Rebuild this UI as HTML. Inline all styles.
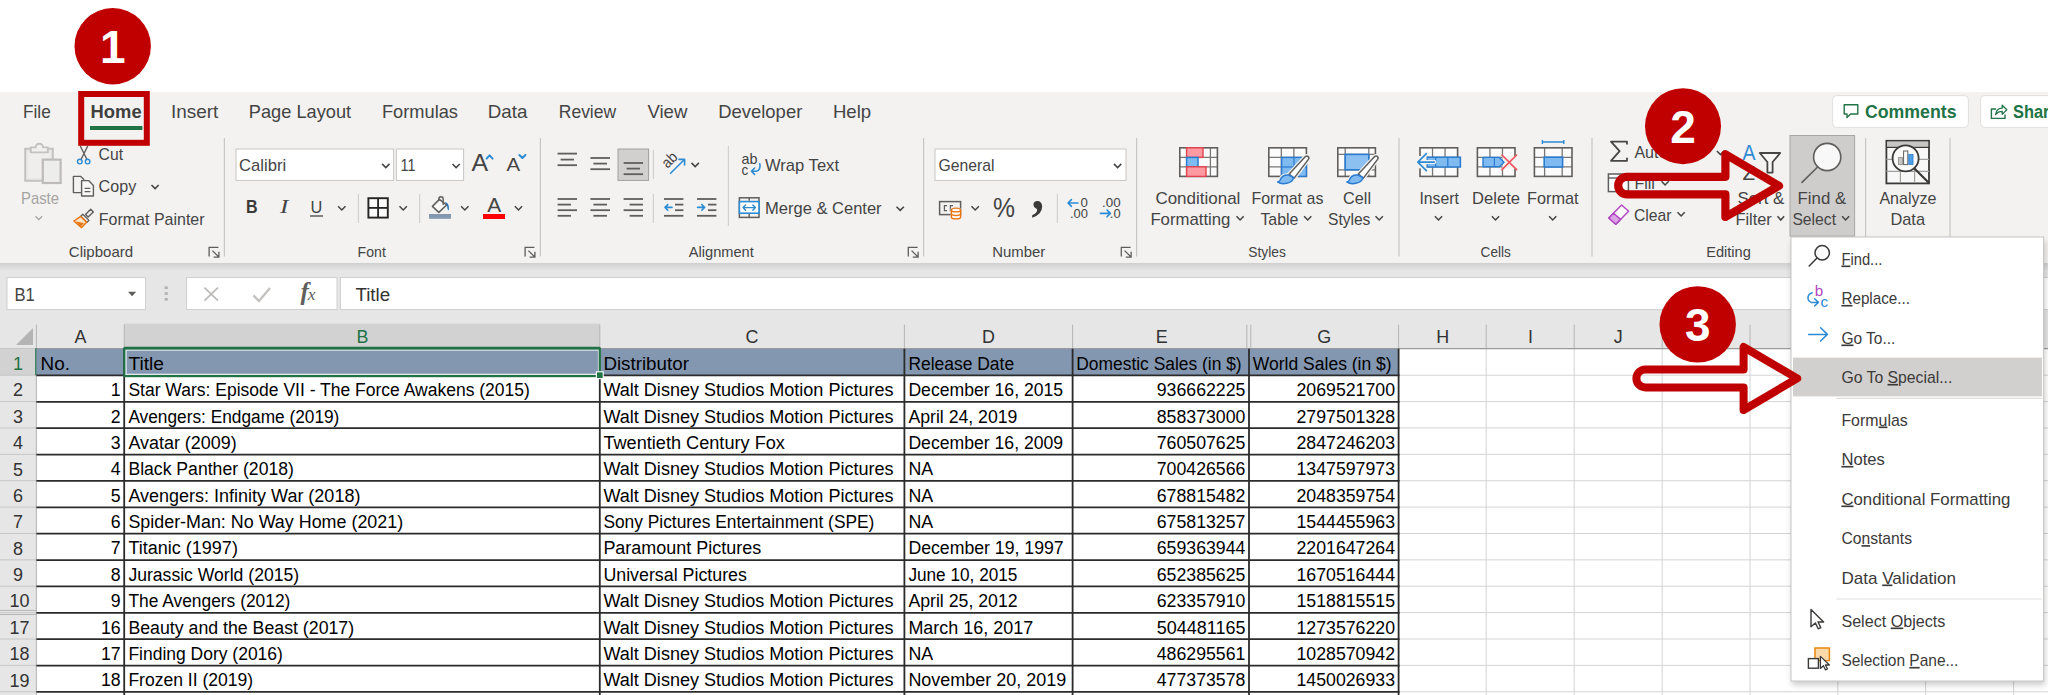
<!DOCTYPE html>
<html lang="en"><head><meta charset="utf-8"><title>Excel - Find &amp; Select - Go To Special</title>
<style>
html,body{margin:0;padding:0;background:#fff;}
body{width:2048px;height:695px;overflow:hidden;font-family:'Liberation Sans', sans-serif;}
svg{display:block;font-family:'Liberation Sans', sans-serif;}
text{white-space:pre;}
</style></head><body>
<svg width="2048" height="695" viewBox="0 0 2048 695">
<defs>
<linearGradient id="shd" x1="0" y1="0" x2="0" y2="1"><stop offset="0" stop-color="#cfcfcf"/><stop offset="1" stop-color="#e6e6e6"/></linearGradient>
<filter id="mshadow" x="-5%" y="-5%" width="110%" height="110%"><feGaussianBlur stdDeviation="3"/></filter>
</defs>
<rect x="0.00" y="0.00" width="2048.00" height="695.00" fill="#ffffff"/>
<rect x="0.00" y="92.00" width="2048.00" height="171.00" fill="#f3f2f1"/>
<rect x="0.00" y="263.00" width="2048.00" height="432.00" fill="#e6e6e6"/>
<rect x="0.00" y="263.00" width="2048.00" height="8.00" fill="url(#shd)"/>
<text x="23.00" y="118.20" font-size="18.2" fill="#444444" textLength="27.70" lengthAdjust="spacingAndGlyphs">File</text>
<text x="171.00" y="118.20" font-size="18.2" fill="#444444" textLength="47.40" lengthAdjust="spacingAndGlyphs">Insert</text>
<text x="248.80" y="118.20" font-size="18.2" fill="#444444" textLength="102.30" lengthAdjust="spacingAndGlyphs">Page Layout</text>
<text x="381.90" y="118.20" font-size="18.2" fill="#444444" textLength="76.10" lengthAdjust="spacingAndGlyphs">Formulas</text>
<text x="487.80" y="118.20" font-size="18.2" fill="#444444" textLength="39.60" lengthAdjust="spacingAndGlyphs">Data</text>
<text x="558.80" y="118.20" font-size="18.2" fill="#444444" textLength="57.30" lengthAdjust="spacingAndGlyphs">Review</text>
<text x="647.40" y="118.20" font-size="18.2" fill="#444444" textLength="40.00" lengthAdjust="spacingAndGlyphs">View</text>
<text x="718.20" y="118.20" font-size="18.2" fill="#444444" textLength="84.10" lengthAdjust="spacingAndGlyphs">Developer</text>
<text x="832.90" y="118.20" font-size="18.2" fill="#444444" textLength="38.20" lengthAdjust="spacingAndGlyphs">Help</text>
<text x="90.60" y="118.20" font-size="18.2" fill="#3f3f3f" textLength="51.00" lengthAdjust="spacingAndGlyphs" font-weight="bold">Home</text>
<rect x="90.00" y="126.00" width="52.40" height="4.00" fill="#217346"/>
<rect x="1832.60" y="95.60" width="135.80" height="31.80" fill="#ffffff" stroke="#e1dfdd" stroke-width="1" rx="4"/>
<rect x="1980.60" y="95.60" width="90.00" height="31.80" fill="#ffffff" stroke="#e1dfdd" stroke-width="1" rx="4"/>
<path d="M1844.2,104.8 h13.6 v9.2 h-7.2 l-3.6,3.4 v-3.4 h-2.8 z" fill="none" stroke="#217346" stroke-width="1.4" stroke-linejoin="round"/>
<text x="1865.00" y="118.00" font-size="17.6" fill="#217346" textLength="91.50" lengthAdjust="spacingAndGlyphs" font-weight="bold">Comments</text>
<path d="M1996,109 h-4.6 v9.4 h13.6 v-4" fill="none" stroke="#217346" stroke-width="1.4" stroke-linejoin="round"/>
<path d="M1995.6,114.6 c0.6,-4.4 3,-6.4 6.6,-6.4 v-3 l4.6,4.6 l-4.6,4.6 v-3 c-2.8,0 -4.8,0.8 -6.6,3.2 z" fill="none" stroke="#217346" stroke-width="1.3" stroke-linejoin="round"/>
<text x="2013.00" y="118.00" font-size="17.6" fill="#217346" textLength="45.50" lengthAdjust="spacingAndGlyphs" font-weight="bold">Share</text>
<line x1="224.40" y1="138.00" x2="224.40" y2="256.60" stroke="#c8c6c4" stroke-width="1.2" />
<line x1="540.40" y1="138.00" x2="540.40" y2="256.60" stroke="#c8c6c4" stroke-width="1.2" />
<line x1="923.60" y1="138.00" x2="923.60" y2="256.60" stroke="#c8c6c4" stroke-width="1.2" />
<line x1="1136.60" y1="138.00" x2="1136.60" y2="256.60" stroke="#c8c6c4" stroke-width="1.2" />
<line x1="1399.00" y1="138.00" x2="1399.00" y2="256.60" stroke="#c8c6c4" stroke-width="1.2" />
<line x1="1592.00" y1="138.00" x2="1592.00" y2="256.60" stroke="#c8c6c4" stroke-width="1.2" />
<line x1="1865.60" y1="138.00" x2="1865.60" y2="256.60" stroke="#c8c6c4" stroke-width="1.2" />
<line x1="1950.00" y1="138.00" x2="1950.00" y2="256.60" stroke="#c8c6c4" stroke-width="1.2" />
<line x1="358.40" y1="194.00" x2="358.40" y2="223.00" stroke="#d2d0ce" stroke-width="1.2" />
<line x1="419.60" y1="194.00" x2="419.60" y2="223.00" stroke="#d2d0ce" stroke-width="1.2" />
<line x1="653.40" y1="150.00" x2="653.40" y2="179.00" stroke="#d2d0ce" stroke-width="1.2" />
<line x1="653.40" y1="194.00" x2="653.40" y2="223.00" stroke="#d2d0ce" stroke-width="1.2" />
<line x1="728.40" y1="146.00" x2="728.40" y2="226.00" stroke="#d2d0ce" stroke-width="1.2" />
<line x1="1057.40" y1="194.00" x2="1057.40" y2="223.00" stroke="#d2d0ce" stroke-width="1.2" />
<text x="68.80" y="257.40" font-size="14.6" fill="#444444" textLength="64.40" lengthAdjust="spacingAndGlyphs">Clipboard</text>
<text x="357.60" y="257.40" font-size="14.6" fill="#444444" textLength="28.20" lengthAdjust="spacingAndGlyphs">Font</text>
<text x="688.80" y="257.40" font-size="14.6" fill="#444444" textLength="65.00" lengthAdjust="spacingAndGlyphs">Alignment</text>
<text x="992.20" y="257.40" font-size="14.6" fill="#444444" textLength="53.00" lengthAdjust="spacingAndGlyphs">Number</text>
<text x="1248.20" y="257.40" font-size="14.6" fill="#444444" textLength="37.60" lengthAdjust="spacingAndGlyphs">Styles</text>
<text x="1480.60" y="257.40" font-size="14.6" fill="#444444" textLength="30.20" lengthAdjust="spacingAndGlyphs">Cells</text>
<text x="1706.20" y="257.40" font-size="14.6" fill="#444444" textLength="44.60" lengthAdjust="spacingAndGlyphs">Editing</text>
<path d="M218.40,247.30 H209.10 V256.60" fill="none" stroke="#605e5c" stroke-width="1.3"/>
<path d="M212.40,250.60 L218.70,256.90 M218.90,251.80 V257.10 H213.60" fill="none" stroke="#605e5c" stroke-width="1.3"/>
<path d="M534.40,247.30 H525.10 V256.60" fill="none" stroke="#605e5c" stroke-width="1.3"/>
<path d="M528.40,250.60 L534.70,256.90 M534.90,251.80 V257.10 H529.60" fill="none" stroke="#605e5c" stroke-width="1.3"/>
<path d="M917.60,247.30 H908.30 V256.60" fill="none" stroke="#605e5c" stroke-width="1.3"/>
<path d="M911.60,250.60 L917.90,256.90 M918.10,251.80 V257.10 H912.80" fill="none" stroke="#605e5c" stroke-width="1.3"/>
<path d="M1130.60,247.30 H1121.30 V256.60" fill="none" stroke="#605e5c" stroke-width="1.3"/>
<path d="M1124.60,250.60 L1130.90,256.90 M1131.10,251.80 V257.10 H1125.80" fill="none" stroke="#605e5c" stroke-width="1.3"/>
<rect x="25.20" y="148.80" width="27.60" height="32.00" fill="#e9e8e7" stroke="#c4c2c0" stroke-width="2"/>
<rect x="28.00" y="152.40" width="22.00" height="25.60" fill="#efeeed"/>
<path d="M30.8,152.4 v-5 h4.8 a3.7,3.7 0 0 1 7.4,0 h4.8 v5 z" fill="#f1f0ef" stroke="#c4c2c0" stroke-width="1.9"/>
<rect x="42.80" y="159.60" width="17.80" height="23.40" fill="#ededec" stroke="#bdbbb9" stroke-width="2.2"/>
<text x="21.00" y="203.60" font-size="16.4" fill="#a6a4a2" textLength="38.00" lengthAdjust="spacingAndGlyphs">Paste</text>
<path d="M35.50,216.30 l3.30,3.30 l3.30,-3.30" fill="none" stroke="#a6a4a2" stroke-width="1.3" stroke-linejoin="miter"/>
<path d="M80.5,146.5 L87,159.5 M87.5,146.5 L81,159.5" fill="none" stroke="#605e5c" stroke-width="1.4" stroke-linecap="round"/>
<circle cx="79.8" cy="161.6" r="2.3" fill="none" stroke="#2b8bd4" stroke-width="1.4"/>
<circle cx="87.6" cy="161.6" r="2.3" fill="none" stroke="#2b8bd4" stroke-width="1.4"/>
<text x="98.60" y="160.00" font-size="16.4" fill="#444444" textLength="24.40" lengthAdjust="spacingAndGlyphs">Cut</text>
<path d="M81,192.6 h-7.6 v-16.2 h7.4 l3.4,3.4" fill="none" stroke="#605e5c" stroke-width="1.4" stroke-linejoin="round"/>
<path d="M81.6,180.6 h7 l4.8,4.8 v10.6 h-11.8 z" fill="#f8f8f8" stroke="#605e5c" stroke-width="1.4" stroke-linejoin="round"/>
<path d="M84.6,188.4 h5.8 M84.6,191.6 h5.8" fill="none" stroke="#605e5c" stroke-width="1.2"/>
<text x="98.60" y="192.40" font-size="16.4" fill="#444444" textLength="37.60" lengthAdjust="spacingAndGlyphs">Copy</text>
<path d="M151.50,184.90 l3.60,3.70 l3.60,-3.70" fill="none" stroke="#444444" stroke-width="1.5" stroke-linejoin="miter"/>
<path d="M85.5,214.5 l5.2,-5.2 l2.6,2.6 l-5.2,5.2 z" fill="none" stroke="#605e5c" stroke-width="1.4" stroke-linejoin="round"/>
<path d="M82.8,214.2 l6.2,6.2 l-2,2 l-6.2,-6.2 z" fill="#f3f2f1" stroke="#605e5c" stroke-width="1.3" stroke-linejoin="round"/>
<path d="M80.8,216.4 l5.8,5.8 l-5,5.4 l-7.8,-6.6 z" fill="#fde3c8" stroke="#e8740c" stroke-width="1.4" stroke-linejoin="round"/>
<path d="M75.6,221.6 l5.4,4.6 l3,-3.2 z" fill="#e8740c"/>
<text x="98.80" y="225.00" font-size="16.4" fill="#444444" textLength="105.80" lengthAdjust="spacingAndGlyphs">Format Painter</text>
<rect x="236.00" y="149.00" width="157.60" height="31.40" fill="#ffffff" stroke="#c8c6c4" stroke-width="1"/>
<text x="239.00" y="170.60" font-size="16.4" fill="#444444" textLength="47.20" lengthAdjust="spacingAndGlyphs">Calibri</text>
<path d="M382.10,163.90 l3.70,3.70 l3.70,-3.70" fill="none" stroke="#444444" stroke-width="1.5" stroke-linejoin="miter"/>
<rect x="396.40" y="149.00" width="67.20" height="31.40" fill="#ffffff" stroke="#c8c6c4" stroke-width="1"/>
<text x="400.60" y="170.60" font-size="16.4" fill="#444444" textLength="15.00" lengthAdjust="spacingAndGlyphs">11</text>
<path d="M452.50,163.90 l3.60,3.70 l3.60,-3.70" fill="none" stroke="#444444" stroke-width="1.5" stroke-linejoin="miter"/>
<text x="471.40" y="170.60" font-size="24" fill="#444444" textLength="16.60" lengthAdjust="spacingAndGlyphs">A</text>
<path d="M486.6,158.6 l3,-3.2 l3,3.2" fill="none" stroke="#2b8bd4" stroke-width="2" stroke-linecap="round" stroke-linejoin="round"/>
<text x="506.60" y="170.60" font-size="18" fill="#444444" textLength="13.60" lengthAdjust="spacingAndGlyphs">A</text>
<path d="M519.4,155 l3,3 l3,-3" fill="none" stroke="#2b8bd4" stroke-width="2" stroke-linecap="round" stroke-linejoin="round"/>
<text x="246.00" y="213.20" font-size="18.4" fill="#3b3a39" textLength="11.60" lengthAdjust="spacingAndGlyphs" font-weight="bold">B</text>
<text x="280.00" y="213.40" font-size="19.4" fill="#444444" textLength="8.40" lengthAdjust="spacingAndGlyphs" font-family="'Liberation Serif', serif" font-style="italic">I</text>
<text x="310.60" y="213.00" font-size="16.8" fill="#444444" textLength="11.80" lengthAdjust="spacingAndGlyphs">U</text>
<line x1="310.00" y1="216.00" x2="323.00" y2="216.00" stroke="#444444" stroke-width="1.3" />
<path d="M338.10,206.30 l3.70,3.70 l3.70,-3.70" fill="none" stroke="#444444" stroke-width="1.5" stroke-linejoin="miter"/>
<rect x="368.40" y="198.20" width="19.40" height="19.40" fill="#fafafa" stroke="#252423" stroke-width="1.9"/>
<line x1="378.10" y1="198.00" x2="378.10" y2="217.60" stroke="#252423" stroke-width="1.8" />
<line x1="368.00" y1="207.90" x2="388.00" y2="207.90" stroke="#252423" stroke-width="1.8" />
<path d="M399.50,206.30 l3.70,3.70 l3.70,-3.70" fill="none" stroke="#444444" stroke-width="1.5" stroke-linejoin="miter"/>
<path d="M432.4,206.4 l7,-7 l7.2,5.6 l-7.8,7.4 z" fill="#f8f8f8" stroke="#605e5c" stroke-width="1.5" stroke-linejoin="round"/>
<path d="M438.8,200.6 v-1.6 a2.2,2.3 0 0 1 4.4,0 v5.6" fill="none" stroke="#605e5c" stroke-width="1.4" stroke-linecap="round"/>
<path d="M444.8,202 c3.6,0.8 4.6,3.8 4,8.6 c-1.7,-0.7 -1.5,-3.4 -1.7,-5 z" fill="#1e6fb8"/>
<rect x="429.00" y="214.00" width="22.00" height="4.80" fill="#8497b0"/>
<path d="M461.10,206.30 l3.70,3.70 l3.70,-3.70" fill="none" stroke="#444444" stroke-width="1.5" stroke-linejoin="miter"/>
<text x="487.20" y="212.00" font-size="20.8" fill="#444444" textLength="14.00" lengthAdjust="spacingAndGlyphs">A</text>
<rect x="483.00" y="214.00" width="22.00" height="5.00" fill="#ff0000"/>
<path d="M514.90,206.30 l3.60,3.70 l3.60,-3.70" fill="none" stroke="#444444" stroke-width="1.5" stroke-linejoin="miter"/>
<line x1="557.60" y1="153.60" x2="577.00" y2="153.60" stroke="#605e5c" stroke-width="1.8" />
<line x1="560.60" y1="159.60" x2="574.00" y2="159.60" stroke="#605e5c" stroke-width="1.8" />
<line x1="557.60" y1="165.20" x2="577.00" y2="165.20" stroke="#605e5c" stroke-width="1.8" />
<line x1="590.40" y1="158.00" x2="610.00" y2="158.00" stroke="#605e5c" stroke-width="1.8" />
<line x1="593.40" y1="163.60" x2="607.00" y2="163.60" stroke="#605e5c" stroke-width="1.8" />
<line x1="590.40" y1="169.20" x2="610.00" y2="169.20" stroke="#605e5c" stroke-width="1.8" />
<rect x="618.00" y="149.00" width="30.60" height="31.40" fill="#d2d0ce" stroke="#a19f9d" stroke-width="1"/>
<line x1="623.60" y1="163.00" x2="643.00" y2="163.00" stroke="#605e5c" stroke-width="1.8" />
<line x1="626.60" y1="168.60" x2="640.00" y2="168.60" stroke="#605e5c" stroke-width="1.8" />
<line x1="623.60" y1="174.20" x2="643.00" y2="174.20" stroke="#605e5c" stroke-width="1.8" />
<line x1="557.60" y1="199.00" x2="577.00" y2="199.00" stroke="#605e5c" stroke-width="1.8" />
<line x1="557.60" y1="204.60" x2="571.00" y2="204.60" stroke="#605e5c" stroke-width="1.8" />
<line x1="557.60" y1="210.20" x2="577.00" y2="210.20" stroke="#605e5c" stroke-width="1.8" />
<line x1="557.60" y1="215.80" x2="571.00" y2="215.80" stroke="#605e5c" stroke-width="1.8" />
<line x1="590.40" y1="199.00" x2="610.00" y2="199.00" stroke="#605e5c" stroke-width="1.8" />
<line x1="593.40" y1="204.60" x2="607.00" y2="204.60" stroke="#605e5c" stroke-width="1.8" />
<line x1="590.40" y1="210.20" x2="610.00" y2="210.20" stroke="#605e5c" stroke-width="1.8" />
<line x1="593.40" y1="215.80" x2="607.00" y2="215.80" stroke="#605e5c" stroke-width="1.8" />
<line x1="623.60" y1="199.00" x2="643.00" y2="199.00" stroke="#605e5c" stroke-width="1.8" />
<line x1="629.60" y1="204.60" x2="643.00" y2="204.60" stroke="#605e5c" stroke-width="1.8" />
<line x1="623.60" y1="210.20" x2="643.00" y2="210.20" stroke="#605e5c" stroke-width="1.8" />
<line x1="629.60" y1="215.80" x2="643.00" y2="215.80" stroke="#605e5c" stroke-width="1.8" />
<text x="0" y="0" font-size="15.2" fill="#444444" transform="translate(667.4,169) rotate(-45)" textLength="15.6" lengthAdjust="spacingAndGlyphs">ab</text>
<path d="M670.6,173.2 L684.2,159.8 M679,159.4 h5.6 v5.6" fill="none" stroke="#2b8bd4" stroke-width="1.6" stroke-linecap="round" stroke-linejoin="round"/>
<path d="M691.50,162.90 l3.70,3.70 l3.70,-3.70" fill="none" stroke="#444444" stroke-width="1.5" stroke-linejoin="miter"/>
<line x1="664.00" y1="199.00" x2="683.40" y2="199.00" stroke="#605e5c" stroke-width="1.8" />
<line x1="664.00" y1="215.80" x2="683.40" y2="215.80" stroke="#605e5c" stroke-width="1.8" />
<line x1="675.00" y1="204.60" x2="683.40" y2="204.60" stroke="#605e5c" stroke-width="1.8" />
<line x1="675.00" y1="210.20" x2="683.40" y2="210.20" stroke="#605e5c" stroke-width="1.8" />
<path d="M672,207.4 h-7 M667.8,204.6 l-2.8,2.8 l2.8,2.8" fill="none" stroke="#2b8bd4" stroke-width="1.6" stroke-linecap="round" stroke-linejoin="round"/>
<line x1="697.00" y1="199.00" x2="716.40" y2="199.00" stroke="#605e5c" stroke-width="1.8" />
<line x1="697.00" y1="215.80" x2="716.40" y2="215.80" stroke="#605e5c" stroke-width="1.8" />
<line x1="708.00" y1="204.60" x2="716.40" y2="204.60" stroke="#605e5c" stroke-width="1.8" />
<line x1="708.00" y1="210.20" x2="716.40" y2="210.20" stroke="#605e5c" stroke-width="1.8" />
<path d="M697.6,207.4 h7 M701.8,204.6 l2.8,2.8 l-2.8,2.8" fill="none" stroke="#2b8bd4" stroke-width="1.6" stroke-linecap="round" stroke-linejoin="round"/>
<text x="741.40" y="164.00" font-size="14.6" fill="#444444" textLength="16.00" lengthAdjust="spacingAndGlyphs">ab</text>
<text x="741.60" y="174.80" font-size="14.6" fill="#444444" textLength="6.80" lengthAdjust="spacingAndGlyphs">c</text>
<path d="M759.8,163.8 c1.2,3.8 -0.8,7.2 -3.8,7.4 h-4.4 M754.6,168 l-3.2,3.2 l3.2,3.2" fill="none" stroke="#2b8bd4" stroke-width="1.6" stroke-linecap="round" stroke-linejoin="round"/>
<text x="765.00" y="170.60" font-size="16.4" fill="#444444" textLength="74.00" lengthAdjust="spacingAndGlyphs">Wrap Text</text>
<rect x="739.40" y="197.80" width="19.60" height="19.60" fill="none" stroke="#605e5c" stroke-width="1.5"/>
<rect x="739.40" y="201.60" width="19.60" height="11.60" fill="#ffffff" stroke="#2b8bd4" stroke-width="1.6"/>
<line x1="749.20" y1="198.00" x2="749.20" y2="200.80" stroke="#605e5c" stroke-width="1.4" />
<line x1="749.20" y1="214.00" x2="749.20" y2="217.40" stroke="#605e5c" stroke-width="1.4" />
<path d="M743,207.6 h12.4 M745.6,205 l-2.6,2.6 l2.6,2.6 M752.8,205 l2.6,2.6 l-2.6,2.6" fill="none" stroke="#2b8bd4" stroke-width="1.4" stroke-linecap="round" stroke-linejoin="round"/>
<text x="765.00" y="214.00" font-size="16.4" fill="#444444" textLength="116.60" lengthAdjust="spacingAndGlyphs">Merge &amp; Center</text>
<path d="M896.50,206.70 l3.70,3.70 l3.70,-3.70" fill="none" stroke="#444444" stroke-width="1.5" stroke-linejoin="miter"/>
<rect x="935.00" y="149.00" width="191.00" height="31.40" fill="#ffffff" stroke="#c8c6c4" stroke-width="1"/>
<text x="938.40" y="170.60" font-size="16.4" fill="#444444" textLength="56.00" lengthAdjust="spacingAndGlyphs">General</text>
<path d="M1113.90,163.90 l3.70,3.70 l3.70,-3.70" fill="none" stroke="#444444" stroke-width="1.5" stroke-linejoin="miter"/>
<rect x="939.60" y="201.60" width="21.00" height="13.00" fill="none" stroke="#605e5c" stroke-width="1.5"/>
<path d="M947,205.6 h-2.6 v5 h2.6 M953,205.6 h-2.6 v5 h2.6" fill="none" stroke="#605e5c" stroke-width="1.2"/>
<rect x="950.60" y="208.60" width="10.80" height="10.60" fill="#f3f2f1"/>
<path d="M951.4,210 v7 a4.6,1.9 0 0 0 9.2,0 v-7" fill="#fff" stroke="#e8740c" stroke-width="1.4"/>
<ellipse cx="956" cy="210" rx="4.6" ry="1.9" fill="#fff" stroke="#e8740c" stroke-width="1.4"/>
<path d="M951.4,213.6 a4.6,1.9 0 0 0 9.2,0" fill="none" stroke="#e8740c" stroke-width="1.3"/>
<path d="M971.50,206.30 l3.70,3.70 l3.70,-3.70" fill="none" stroke="#444444" stroke-width="1.5" stroke-linejoin="miter"/>
<text x="993.00" y="217.40" font-size="27" fill="#444444" textLength="22.00" lengthAdjust="spacingAndGlyphs">%</text>
<text x="1031.40" y="208.60" font-size="54" fill="#3b3a39" textLength="12.60" lengthAdjust="spacingAndGlyphs" font-weight="bold" font-family="'Liberation Serif', serif">,</text>
<path d="M1068,203 h10 M1071.4,199.6 l-3.4,3.4 l3.4,3.4" fill="none" stroke="#2b8bd4" stroke-width="1.6" stroke-linecap="round" stroke-linejoin="round"/>
<text x="1080.60" y="206.60" font-size="12.4" fill="#444444" textLength="7.40" lengthAdjust="spacingAndGlyphs">0</text>
<text x="1070.00" y="218.00" font-size="12.4" fill="#444444" textLength="18.00" lengthAdjust="spacingAndGlyphs">.00</text>
<text x="1102.00" y="206.60" font-size="12.4" fill="#444444" textLength="18.60" lengthAdjust="spacingAndGlyphs">.00</text>
<path d="M1100.4,213.4 h10 M1107,210 l3.4,3.4 l-3.4,3.4" fill="none" stroke="#2b8bd4" stroke-width="1.6" stroke-linecap="round" stroke-linejoin="round"/>
<text x="1109.80" y="218.00" font-size="12.4" fill="#444444" textLength="10.80" lengthAdjust="spacingAndGlyphs">.0</text>
<rect x="1179.80" y="147.80" width="37.60" height="28.60" fill="#fbfbfb"/>
<line x1="1186.60" y1="147.80" x2="1186.60" y2="176.40" stroke="#797775" stroke-width="1.3" />
<line x1="1210.40" y1="147.80" x2="1210.40" y2="176.40" stroke="#797775" stroke-width="1.3" />
<line x1="1179.80" y1="157.33" x2="1217.40" y2="157.33" stroke="#797775" stroke-width="1.3" />
<line x1="1179.80" y1="166.87" x2="1217.40" y2="166.87" stroke="#797775" stroke-width="1.3" />
<rect x="1179.80" y="147.80" width="37.60" height="28.60" fill="none" stroke="#605e5c" stroke-width="1.6"/>
<rect x="1186.60" y="147.80" width="16.40" height="9.60" fill="#ff9aa2" stroke="#e0434d" stroke-width="1.4"/>
<rect x="1186.60" y="157.40" width="11.40" height="9.40" fill="#7fbaf0" stroke="#2b7cd0" stroke-width="1.5"/>
<rect x="1186.60" y="166.80" width="19.40" height="9.60" fill="#ff9aa2" stroke="#e0434d" stroke-width="1.4"/>
<text x="1155.40" y="203.60" font-size="16.4" fill="#444444" textLength="85.00" lengthAdjust="spacingAndGlyphs">Conditional</text>
<text x="1150.40" y="225.00" font-size="16.4" fill="#444444" textLength="80.00" lengthAdjust="spacingAndGlyphs">Formatting</text>
<path d="M1236.50,216.30 l3.60,3.70 l3.60,-3.70" fill="none" stroke="#444444" stroke-width="1.5" stroke-linejoin="miter"/>
<rect x="1268.80" y="147.80" width="37.60" height="28.60" fill="#fbfbfb"/>
<line x1="1281.33" y1="147.80" x2="1281.33" y2="176.40" stroke="#797775" stroke-width="1.3" />
<line x1="1293.87" y1="147.80" x2="1293.87" y2="176.40" stroke="#797775" stroke-width="1.3" />
<line x1="1268.80" y1="157.33" x2="1306.40" y2="157.33" stroke="#797775" stroke-width="1.3" />
<line x1="1268.80" y1="166.87" x2="1306.40" y2="166.87" stroke="#797775" stroke-width="1.3" />
<rect x="1268.80" y="147.80" width="37.60" height="28.60" fill="none" stroke="#605e5c" stroke-width="1.6"/>
<rect x="1281.60" y="157.40" width="24.80" height="19.00" fill="#7fbaf0" stroke="#2b7cd0" stroke-width="1.4"/>
<line x1="1294.00" y1="157.40" x2="1294.00" y2="176.40" stroke="#2b7cd0" stroke-width="1.2" />
<line x1="1281.60" y1="167.00" x2="1306.40" y2="167.00" stroke="#2b7cd0" stroke-width="1.2" />
<path d="M1289.1999999999998,174.0 L1305.1999999999998,156.8 c2.4,-2 4.8,0.6 3,2.8 L1294.0,178.4 z" fill="#f3f2f1" stroke="#f3f2f1" stroke-width="4" stroke-linejoin="round"/>
<path d="M1288.8,175.0 c-6,-0.6 -8,3 -8.6,5 c-0.4,1.2 -1.4,1.7 -2.6,1.9 c4,3 15,2.2 16,-4.4 z" fill="#f3f2f1" stroke="#f3f2f1" stroke-width="3.4" stroke-linejoin="round"/>
<path d="M1289.1999999999998,174.0 L1305.1999999999998,156.8 c2.4,-2 4.8,0.6 3,2.8 L1294.0,178.4 z" fill="#ffffff" stroke="#605e5c" stroke-width="1.5" stroke-linejoin="round"/>
<path d="M1288.8,175.0 c-6,-0.6 -8,3 -8.6,5 c-0.4,1.2 -1.4,1.7 -2.6,1.9 c4,3 15,2.2 16,-4.4 z" fill="#7fbaf0" stroke="#2b7cd0" stroke-width="1.5" stroke-linejoin="round"/>
<text x="1251.40" y="203.60" font-size="16.4" fill="#444444" textLength="72.00" lengthAdjust="spacingAndGlyphs">Format as</text>
<text x="1260.40" y="225.00" font-size="16.4" fill="#444444" textLength="38.00" lengthAdjust="spacingAndGlyphs">Table</text>
<path d="M1304.10,216.30 l3.60,3.70 l3.60,-3.70" fill="none" stroke="#444444" stroke-width="1.5" stroke-linejoin="miter"/>
<rect x="1337.80" y="147.80" width="37.60" height="28.60" fill="#fbfbfb"/>
<line x1="1345.20" y1="147.80" x2="1345.20" y2="176.40" stroke="#797775" stroke-width="1.3" />
<line x1="1368.80" y1="147.80" x2="1368.80" y2="176.40" stroke="#797775" stroke-width="1.3" />
<line x1="1337.80" y1="154.40" x2="1375.40" y2="154.40" stroke="#797775" stroke-width="1.3" />
<line x1="1337.80" y1="169.80" x2="1375.40" y2="169.80" stroke="#797775" stroke-width="1.3" />
<rect x="1337.80" y="147.80" width="37.60" height="28.60" fill="none" stroke="#605e5c" stroke-width="1.6"/>
<rect x="1345.20" y="154.40" width="23.60" height="15.40" fill="#8cc0f0" stroke="#2b7cd0" stroke-width="1.6"/>
<path d="M1358.3999999999999,174.0 L1374.3999999999999,156.8 c2.4,-2 4.8,0.6 3,2.8 L1363.2,178.4 z" fill="#f3f2f1" stroke="#f3f2f1" stroke-width="4" stroke-linejoin="round"/>
<path d="M1358.0,175.0 c-6,-0.6 -8,3 -8.6,5 c-0.4,1.2 -1.4,1.7 -2.6,1.9 c4,3 15,2.2 16,-4.4 z" fill="#f3f2f1" stroke="#f3f2f1" stroke-width="3.4" stroke-linejoin="round"/>
<path d="M1358.3999999999999,174.0 L1374.3999999999999,156.8 c2.4,-2 4.8,0.6 3,2.8 L1363.2,178.4 z" fill="#ffffff" stroke="#605e5c" stroke-width="1.5" stroke-linejoin="round"/>
<path d="M1358.0,175.0 c-6,-0.6 -8,3 -8.6,5 c-0.4,1.2 -1.4,1.7 -2.6,1.9 c4,3 15,2.2 16,-4.4 z" fill="#7fbaf0" stroke="#2b7cd0" stroke-width="1.5" stroke-linejoin="round"/>
<text x="1343.00" y="203.60" font-size="16.4" fill="#444444" textLength="28.00" lengthAdjust="spacingAndGlyphs">Cell</text>
<text x="1328.00" y="225.00" font-size="16.4" fill="#444444" textLength="42.40" lengthAdjust="spacingAndGlyphs">Styles</text>
<path d="M1375.50,216.30 l3.70,3.70 l3.70,-3.70" fill="none" stroke="#444444" stroke-width="1.5" stroke-linejoin="miter"/>
<rect x="1420.00" y="147.80" width="37.60" height="28.60" fill="#fbfbfb"/>
<line x1="1432.53" y1="147.80" x2="1432.53" y2="176.40" stroke="#797775" stroke-width="1.3" />
<line x1="1445.07" y1="147.80" x2="1445.07" y2="176.40" stroke="#797775" stroke-width="1.3" />
<line x1="1420.00" y1="157.33" x2="1457.60" y2="157.33" stroke="#797775" stroke-width="1.3" />
<line x1="1420.00" y1="166.87" x2="1457.60" y2="166.87" stroke="#797775" stroke-width="1.3" />
<rect x="1420.00" y="147.80" width="37.60" height="28.60" fill="none" stroke="#605e5c" stroke-width="1.6"/>
<rect x="1427.00" y="157.20" width="33.40" height="9.80" fill="#7fbaf0" stroke="#2b7cd0" stroke-width="1.5"/>
<line x1="1435.60" y1="157.20" x2="1435.60" y2="167.00" stroke="#2b7cd0" stroke-width="1.3" />
<line x1="1447.80" y1="157.20" x2="1447.80" y2="167.00" stroke="#2b7cd0" stroke-width="1.3" />
<rect x="1416.00" y="156.00" width="10.40" height="12.40" fill="#f3f2f1"/>
<path d="M1426.4,153.6 l-8.6,8.5 l8.6,8.5 M1418,162.1 h16.4" fill="none" stroke="#f3f2f1" stroke-width="4" stroke-linecap="round" stroke-linejoin="round"/>
<path d="M1426.4,153.6 l-8.6,8.5 l8.6,8.5 M1418,162.1 h16.4" fill="none" stroke="#2b8bd4" stroke-width="1.6" stroke-linecap="round" stroke-linejoin="round"/>
<text x="1419.40" y="203.60" font-size="16.4" fill="#444444" textLength="39.40" lengthAdjust="spacingAndGlyphs">Insert</text>
<path d="M1434.90,216.30 l3.60,3.70 l3.60,-3.70" fill="none" stroke="#444444" stroke-width="1.5" stroke-linejoin="miter"/>
<rect x="1477.40" y="147.80" width="37.60" height="28.60" fill="#fbfbfb"/>
<line x1="1489.93" y1="147.80" x2="1489.93" y2="176.40" stroke="#797775" stroke-width="1.3" />
<line x1="1502.47" y1="147.80" x2="1502.47" y2="176.40" stroke="#797775" stroke-width="1.3" />
<line x1="1477.40" y1="157.33" x2="1515.00" y2="157.33" stroke="#797775" stroke-width="1.3" />
<line x1="1477.40" y1="166.87" x2="1515.00" y2="166.87" stroke="#797775" stroke-width="1.3" />
<rect x="1477.40" y="147.80" width="37.60" height="28.60" fill="none" stroke="#605e5c" stroke-width="1.6"/>
<rect x="1502.40" y="156.00" width="16.00" height="12.40" fill="#f3f2f1"/>
<path d="M1483,157.4 h16.4 l4.6,4.8 l-4.6,4.6 h-16.4 z" fill="#7fbaf0" stroke="#2b7cd0" stroke-width="1.4" stroke-linejoin="round"/>
<line x1="1494.40" y1="157.40" x2="1494.40" y2="166.80" stroke="#2b7cd0" stroke-width="1.2" />
<path d="M1502,155 l14.6,14.6 M1516.6,155 l-14.6,14.6" fill="none" stroke="#f0535b" stroke-width="1.6" stroke-linecap="round"/>
<text x="1472.00" y="203.60" font-size="16.4" fill="#444444" textLength="48.00" lengthAdjust="spacingAndGlyphs">Delete</text>
<path d="M1491.90,216.30 l3.60,3.70 l3.60,-3.70" fill="none" stroke="#444444" stroke-width="1.5" stroke-linejoin="miter"/>
<rect x="1534.40" y="147.80" width="37.60" height="28.60" fill="#fbfbfb"/>
<line x1="1544.60" y1="147.80" x2="1544.60" y2="176.40" stroke="#797775" stroke-width="1.3" />
<line x1="1562.20" y1="147.80" x2="1562.20" y2="176.40" stroke="#797775" stroke-width="1.3" />
<line x1="1534.40" y1="157.33" x2="1572.00" y2="157.33" stroke="#797775" stroke-width="1.3" />
<line x1="1534.40" y1="166.87" x2="1572.00" y2="166.87" stroke="#797775" stroke-width="1.3" />
<rect x="1534.40" y="147.80" width="37.60" height="28.60" fill="none" stroke="#605e5c" stroke-width="1.6"/>
<rect x="1544.20" y="157.20" width="18.40" height="9.80" fill="#7fbaf0" stroke="#2b7cd0" stroke-width="1.6"/>
<path d="M1542.4,142 h21.4 M1542.4,140 v4 M1563.8,140 v4" fill="none" stroke="#2b8bd4" stroke-width="1.4"/>
<text x="1527.00" y="203.60" font-size="16.4" fill="#444444" textLength="51.60" lengthAdjust="spacingAndGlyphs">Format</text>
<path d="M1549.10,216.30 l3.60,3.70 l3.60,-3.70" fill="none" stroke="#444444" stroke-width="1.5" stroke-linejoin="miter"/>
<path d="M1627,144.6 v-3 h-16 l8.6,9.6 l-8.6,9.6 h16 v-3" fill="none" stroke="#484644" stroke-width="1.8" stroke-linejoin="round"/>
<text x="1634.40" y="158.00" font-size="16.4" fill="#444444" textLength="66.00" lengthAdjust="spacingAndGlyphs">AutoSum</text>
<path d="M1716.90,150.90 l3.60,3.70 l3.60,-3.70" fill="none" stroke="#444444" stroke-width="1.5" stroke-linejoin="miter"/>
<rect x="1608.40" y="174.00" width="20.00" height="17.60" fill="#ffffff" stroke="#605e5c" stroke-width="1.5"/>
<line x1="1608.40" y1="178.00" x2="1628.40" y2="178.00" stroke="#605e5c" stroke-width="1.4" />
<path d="M1618.4,181 v7 M1615.4,185.4 l3,3 l3,-3" fill="none" stroke="#2b8bd4" stroke-width="1.5" stroke-linecap="round" stroke-linejoin="round"/>
<text x="1634.40" y="189.00" font-size="16.4" fill="#444444" textLength="20.40" lengthAdjust="spacingAndGlyphs">Fill</text>
<path d="M1661.50,181.30 l3.60,3.70 l3.60,-3.70" fill="none" stroke="#444444" stroke-width="1.5" stroke-linejoin="miter"/>
<path d="M1621.6,205 L1628.6,211.2 L1615.8,224.2 L1608.8,218 Z" fill="#fbfbfb" stroke="#b146c2" stroke-width="1.5" stroke-linejoin="round"/>
<path d="M1613.6,213.2 L1620.6,219.4 L1615.8,224.2 L1608.8,218 Z" fill="#dba4e4" stroke="#b146c2" stroke-width="1.5" stroke-linejoin="round"/>
<text x="1634.00" y="220.60" font-size="16.4" fill="#444444" textLength="37.60" lengthAdjust="spacingAndGlyphs">Clear</text>
<path d="M1677.50,212.30 l3.60,3.70 l3.60,-3.70" fill="none" stroke="#444444" stroke-width="1.5" stroke-linejoin="miter"/>
<text x="1742.60" y="160.00" font-size="21.6" fill="#2b8bd4" textLength="13.00" lengthAdjust="spacingAndGlyphs">A</text>
<text x="1742.60" y="179.60" font-size="19.4" fill="#444444" textLength="12.60" lengthAdjust="spacingAndGlyphs">Z</text>
<path d="M1759.8,153 h20.4 l-7.6,9 v10.6 h-5.2 v-10.6 z" fill="#f8f8f8" stroke="#484644" stroke-width="1.8" stroke-linejoin="round"/>
<text x="1737.40" y="203.60" font-size="16.4" fill="#444444" textLength="47.00" lengthAdjust="spacingAndGlyphs">Sort &amp;</text>
<text x="1735.40" y="225.00" font-size="16.4" fill="#444444" textLength="36.40" lengthAdjust="spacingAndGlyphs">Filter</text>
<path d="M1777.50,216.30 l3.30,3.70 l3.30,-3.70" fill="none" stroke="#444444" stroke-width="1.5" stroke-linejoin="miter"/>
<rect x="1790.00" y="135.50" width="64.60" height="100.60" fill="#cfcdcb" stroke="#a9a7a5" stroke-width="1"/>
<circle cx="1827.2" cy="157" r="13.6" fill="#f8f8f8" stroke="#605e5c" stroke-width="1.6"/>
<line x1="1817.40" y1="167.20" x2="1802.00" y2="182.40" stroke="#605e5c" stroke-width="1.6" stroke-linecap="round"/>
<text x="1797.60" y="203.60" font-size="16.4" fill="#444444" textLength="48.60" lengthAdjust="spacingAndGlyphs">Find &amp;</text>
<text x="1792.40" y="225.00" font-size="16.4" fill="#444444" textLength="43.60" lengthAdjust="spacingAndGlyphs">Select</text>
<path d="M1842.10,216.30 l3.50,3.70 l3.50,-3.70" fill="none" stroke="#444444" stroke-width="1.5" stroke-linejoin="miter"/>
<rect x="1886.40" y="140.80" width="42.60" height="42.60" fill="#f8f8f8" stroke="#3b3a39" stroke-width="1.8"/>
<rect x="1887.20" y="141.60" width="41.00" height="5.20" fill="#c8c6c4"/>
<line x1="1886.40" y1="147.40" x2="1929.00" y2="147.40" stroke="#3b3a39" stroke-width="1.3" />
<line x1="1900.40" y1="147.40" x2="1900.40" y2="183.00" stroke="#a19f9d" stroke-width="1.2" />
<line x1="1914.60" y1="147.40" x2="1914.60" y2="183.00" stroke="#a19f9d" stroke-width="1.2" />
<line x1="1886.40" y1="159.40" x2="1929.00" y2="159.40" stroke="#a19f9d" stroke-width="1.2" />
<line x1="1886.40" y1="171.40" x2="1929.00" y2="171.40" stroke="#a19f9d" stroke-width="1.2" />
<line x1="1914.00" y1="168.00" x2="1929.00" y2="183.00" stroke="#3b3a39" stroke-width="2.2" />
<circle cx="1905.6" cy="158.4" r="13" fill="#fafafa" stroke="#3b3a39" stroke-width="1.8"/>
<rect x="1898.60" y="157.60" width="4.00" height="7.00" fill="#c8c6c4" stroke="#8a8886" stroke-width="0.8"/>
<rect x="1903.60" y="151.00" width="4.20" height="13.60" fill="#ffffff" stroke="#605e5c" stroke-width="1"/>
<rect x="1908.80" y="154.40" width="4.20" height="10.20" fill="#4ea1e8" stroke="#2b7cd0" stroke-width="0.8"/>
<text x="1879.40" y="203.60" font-size="16.4" fill="#444444" textLength="57.00" lengthAdjust="spacingAndGlyphs">Analyze</text>
<text x="1890.40" y="225.00" font-size="16.4" fill="#444444" textLength="34.60" lengthAdjust="spacingAndGlyphs">Data</text>
<rect x="7.00" y="277.60" width="138.60" height="32.00" fill="#ffffff" stroke="#cfcfcf" stroke-width="1"/>
<text x="14.40" y="301.00" font-size="17.6" fill="#444" textLength="20.40" lengthAdjust="spacingAndGlyphs">B1</text>
<path d="M128,291.8 h8.2 l-4.1,4.4 z" fill="#605e5c"/>
<rect x="164.6" y="286.4" width="3.2" height="2.6" fill="#b4b2b0"/>
<rect x="164.6" y="292.2" width="3.2" height="2.6" fill="#b4b2b0"/>
<rect x="164.6" y="298" width="3.2" height="2.6" fill="#b4b2b0"/>
<rect x="186.60" y="277.60" width="150.40" height="32.00" fill="#ffffff" stroke="#cfcfcf" stroke-width="1"/>
<path d="M204.4,287.6 l13.6,13 M218,287.6 l-13.6,13" fill="none" stroke="#bdbbb9" stroke-width="1.8"/>
<path d="M253.4,295.4 l5.6,5.6 l11,-13" fill="none" stroke="#c4c2c0" stroke-width="2.4"/>
<text x="300.60" y="300.20" font-size="25" fill="#605e5c" font-family="'Liberation Serif', serif" font-style="italic"><tspan font-size="25" font-weight="bold">f</tspan><tspan font-size="17.5" dx="-1.2">x</tspan></text>
<rect x="340.40" y="277.60" width="1720.00" height="32.00" fill="#ffffff" stroke="#cfcfcf" stroke-width="1"/>
<text x="355.40" y="300.60" font-size="17.6" fill="#333" textLength="34.78" lengthAdjust="spacingAndGlyphs">Title</text>
<rect x="36.40" y="348.20" width="2048.00" height="346.80" fill="#ffffff"/>
<line x1="1398.60" y1="375.20" x2="2048.00" y2="375.20" stroke="#d4d4d4" stroke-width="1" />
<line x1="1398.60" y1="401.58" x2="2048.00" y2="401.58" stroke="#d4d4d4" stroke-width="1" />
<line x1="1398.60" y1="427.96" x2="2048.00" y2="427.96" stroke="#d4d4d4" stroke-width="1" />
<line x1="1398.60" y1="454.34" x2="2048.00" y2="454.34" stroke="#d4d4d4" stroke-width="1" />
<line x1="1398.60" y1="480.72" x2="2048.00" y2="480.72" stroke="#d4d4d4" stroke-width="1" />
<line x1="1398.60" y1="507.10" x2="2048.00" y2="507.10" stroke="#d4d4d4" stroke-width="1" />
<line x1="1398.60" y1="533.48" x2="2048.00" y2="533.48" stroke="#d4d4d4" stroke-width="1" />
<line x1="1398.60" y1="559.86" x2="2048.00" y2="559.86" stroke="#d4d4d4" stroke-width="1" />
<line x1="1398.60" y1="586.24" x2="2048.00" y2="586.24" stroke="#d4d4d4" stroke-width="1" />
<line x1="1398.60" y1="612.62" x2="2048.00" y2="612.62" stroke="#d4d4d4" stroke-width="1" />
<line x1="1398.60" y1="639.00" x2="2048.00" y2="639.00" stroke="#d4d4d4" stroke-width="1" />
<line x1="1398.60" y1="665.38" x2="2048.00" y2="665.38" stroke="#d4d4d4" stroke-width="1" />
<line x1="1398.60" y1="691.76" x2="2048.00" y2="691.76" stroke="#d4d4d4" stroke-width="1" />
<line x1="1486.20" y1="348.20" x2="1486.20" y2="695.00" stroke="#d4d4d4" stroke-width="1" />
<line x1="1574.20" y1="348.20" x2="1574.20" y2="695.00" stroke="#d4d4d4" stroke-width="1" />
<line x1="1662.20" y1="348.20" x2="1662.20" y2="695.00" stroke="#d4d4d4" stroke-width="1" />
<line x1="1750.00" y1="348.20" x2="1750.00" y2="695.00" stroke="#d4d4d4" stroke-width="1" />
<line x1="1837.80" y1="348.20" x2="1837.80" y2="695.00" stroke="#d4d4d4" stroke-width="1" />
<line x1="1925.60" y1="348.20" x2="1925.60" y2="695.00" stroke="#d4d4d4" stroke-width="1" />
<line x1="2013.60" y1="348.20" x2="2013.60" y2="695.00" stroke="#d4d4d4" stroke-width="1" />
<rect x="124.20" y="323.60" width="475.60" height="24.60" fill="#d2d2d2"/>
<line x1="36.40" y1="324.60" x2="36.40" y2="348.20" stroke="#b4b4b4" stroke-width="1" />
<line x1="124.20" y1="324.60" x2="124.20" y2="348.20" stroke="#b4b4b4" stroke-width="1" />
<line x1="599.80" y1="324.60" x2="599.80" y2="348.20" stroke="#b4b4b4" stroke-width="1" />
<line x1="904.40" y1="324.60" x2="904.40" y2="348.20" stroke="#b4b4b4" stroke-width="1" />
<line x1="1072.60" y1="324.60" x2="1072.60" y2="348.20" stroke="#b4b4b4" stroke-width="1" />
<line x1="1246.80" y1="324.60" x2="1246.80" y2="348.20" stroke="#b4b4b4" stroke-width="1" />
<line x1="1250.80" y1="324.60" x2="1250.80" y2="348.20" stroke="#b4b4b4" stroke-width="1" />
<line x1="1398.60" y1="324.60" x2="1398.60" y2="348.20" stroke="#b4b4b4" stroke-width="1" />
<line x1="1486.20" y1="324.60" x2="1486.20" y2="348.20" stroke="#b4b4b4" stroke-width="1" />
<line x1="1574.20" y1="324.60" x2="1574.20" y2="348.20" stroke="#b4b4b4" stroke-width="1" />
<line x1="1662.20" y1="324.60" x2="1662.20" y2="348.20" stroke="#b4b4b4" stroke-width="1" />
<line x1="1750.00" y1="324.60" x2="1750.00" y2="348.20" stroke="#b4b4b4" stroke-width="1" />
<line x1="1837.80" y1="324.60" x2="1837.80" y2="348.20" stroke="#b4b4b4" stroke-width="1" />
<line x1="1925.60" y1="324.60" x2="1925.60" y2="348.20" stroke="#b4b4b4" stroke-width="1" />
<line x1="2013.60" y1="324.60" x2="2013.60" y2="348.20" stroke="#b4b4b4" stroke-width="1" />
<line x1="0.00" y1="348.60" x2="2048.00" y2="348.60" stroke="#9b9b9b" stroke-width="1.2" />
<path d="M33,328 V345 H16 z" fill="#b4b4b4"/>
<text x="80.40" y="343.10" font-size="17.9" fill="#333" text-anchor="middle">A</text>
<text x="752.00" y="343.10" font-size="17.9" fill="#333" text-anchor="middle">C</text>
<text x="988.40" y="343.10" font-size="17.9" fill="#333" text-anchor="middle">D</text>
<text x="1161.60" y="343.10" font-size="17.9" fill="#333" text-anchor="middle">E</text>
<text x="1324.20" y="343.10" font-size="17.9" fill="#333" text-anchor="middle">G</text>
<text x="1442.60" y="343.10" font-size="17.9" fill="#333" text-anchor="middle">H</text>
<text x="1530.40" y="343.10" font-size="17.9" fill="#333" text-anchor="middle">I</text>
<text x="1618.20" y="343.10" font-size="17.9" fill="#333" text-anchor="middle">J</text>
<text x="362.40" y="343.10" font-size="17.9" fill="#217346" text-anchor="middle">B</text>
<line x1="124.20" y1="347.60" x2="599.80" y2="347.60" stroke="#217346" stroke-width="1.6" />
<rect x="0.00" y="348.20" width="36.40" height="27.00" fill="#d2d2d2"/>
<line x1="0.00" y1="375.20" x2="36.40" y2="375.20" stroke="#c6c6c6" stroke-width="1" />
<line x1="0.00" y1="401.58" x2="36.40" y2="401.58" stroke="#c6c6c6" stroke-width="1" />
<line x1="0.00" y1="427.96" x2="36.40" y2="427.96" stroke="#c6c6c6" stroke-width="1" />
<line x1="0.00" y1="454.34" x2="36.40" y2="454.34" stroke="#c6c6c6" stroke-width="1" />
<line x1="0.00" y1="480.72" x2="36.40" y2="480.72" stroke="#c6c6c6" stroke-width="1" />
<line x1="0.00" y1="507.10" x2="36.40" y2="507.10" stroke="#c6c6c6" stroke-width="1" />
<line x1="0.00" y1="533.48" x2="36.40" y2="533.48" stroke="#c6c6c6" stroke-width="1" />
<line x1="0.00" y1="559.86" x2="36.40" y2="559.86" stroke="#c6c6c6" stroke-width="1" />
<line x1="0.00" y1="586.24" x2="36.40" y2="586.24" stroke="#c6c6c6" stroke-width="1" />
<line x1="0.00" y1="612.62" x2="36.40" y2="612.62" stroke="#c6c6c6" stroke-width="1" />
<line x1="0.00" y1="639.00" x2="36.40" y2="639.00" stroke="#c6c6c6" stroke-width="1" />
<line x1="0.00" y1="665.38" x2="36.40" y2="665.38" stroke="#c6c6c6" stroke-width="1" />
<line x1="0.00" y1="691.76" x2="36.40" y2="691.76" stroke="#c6c6c6" stroke-width="1" />
<line x1="36.40" y1="348.20" x2="36.40" y2="695.00" stroke="#b4b4b4" stroke-width="1" />
<line x1="36.00" y1="348.20" x2="36.00" y2="375.20" stroke="#217346" stroke-width="1.6" />
<text x="18.10" y="370.00" font-size="18.4" fill="#217346" textLength="10.00" lengthAdjust="spacingAndGlyphs" text-anchor="middle">1</text>
<text x="18.10" y="396.38" font-size="18.4" fill="#333" textLength="10.00" lengthAdjust="spacingAndGlyphs" text-anchor="middle">2</text>
<text x="18.10" y="422.76" font-size="18.4" fill="#333" textLength="10.00" lengthAdjust="spacingAndGlyphs" text-anchor="middle">3</text>
<text x="18.10" y="449.14" font-size="18.4" fill="#333" textLength="10.00" lengthAdjust="spacingAndGlyphs" text-anchor="middle">4</text>
<text x="18.10" y="475.52" font-size="18.4" fill="#333" textLength="10.00" lengthAdjust="spacingAndGlyphs" text-anchor="middle">5</text>
<text x="18.10" y="501.90" font-size="18.4" fill="#333" textLength="10.00" lengthAdjust="spacingAndGlyphs" text-anchor="middle">6</text>
<text x="18.10" y="528.28" font-size="18.4" fill="#333" textLength="10.00" lengthAdjust="spacingAndGlyphs" text-anchor="middle">7</text>
<text x="18.10" y="554.66" font-size="18.4" fill="#333" textLength="10.00" lengthAdjust="spacingAndGlyphs" text-anchor="middle">8</text>
<text x="18.10" y="581.04" font-size="18.4" fill="#333" textLength="10.00" lengthAdjust="spacingAndGlyphs" text-anchor="middle">9</text>
<text x="19.60" y="607.42" font-size="18.4" fill="#333" textLength="20.00" lengthAdjust="spacingAndGlyphs" text-anchor="middle">10</text>
<text x="19.60" y="633.80" font-size="18.4" fill="#333" textLength="20.00" lengthAdjust="spacingAndGlyphs" text-anchor="middle">17</text>
<text x="19.60" y="660.18" font-size="18.4" fill="#333" textLength="20.00" lengthAdjust="spacingAndGlyphs" text-anchor="middle">18</text>
<text x="19.60" y="686.56" font-size="18.4" fill="#333" textLength="20.00" lengthAdjust="spacingAndGlyphs" text-anchor="middle">19</text>
<line x1="0.00" y1="610.42" x2="36.40" y2="610.42" stroke="#b4b4b4" stroke-width="1" />
<line x1="0.00" y1="614.52" x2="36.40" y2="614.52" stroke="#b4b4b4" stroke-width="1" />
<rect x="36.40" y="348.90" width="1362.20" height="26.30" fill="#8497b0"/>
<line x1="36.40" y1="375.40" x2="1399.50" y2="375.40" stroke="#2b2b2b" stroke-width="1.75" />
<line x1="36.40" y1="401.78" x2="1399.50" y2="401.78" stroke="#2b2b2b" stroke-width="1.75" />
<line x1="36.40" y1="428.16" x2="1399.50" y2="428.16" stroke="#2b2b2b" stroke-width="1.75" />
<line x1="36.40" y1="454.54" x2="1399.50" y2="454.54" stroke="#2b2b2b" stroke-width="1.75" />
<line x1="36.40" y1="480.92" x2="1399.50" y2="480.92" stroke="#2b2b2b" stroke-width="1.75" />
<line x1="36.40" y1="507.30" x2="1399.50" y2="507.30" stroke="#2b2b2b" stroke-width="1.75" />
<line x1="36.40" y1="533.68" x2="1399.50" y2="533.68" stroke="#2b2b2b" stroke-width="1.75" />
<line x1="36.40" y1="560.06" x2="1399.50" y2="560.06" stroke="#2b2b2b" stroke-width="1.75" />
<line x1="36.40" y1="586.44" x2="1399.50" y2="586.44" stroke="#2b2b2b" stroke-width="1.75" />
<line x1="36.40" y1="612.82" x2="1399.50" y2="612.82" stroke="#2b2b2b" stroke-width="1.75" />
<line x1="36.40" y1="639.20" x2="1399.50" y2="639.20" stroke="#2b2b2b" stroke-width="1.75" />
<line x1="36.40" y1="665.58" x2="1399.50" y2="665.58" stroke="#2b2b2b" stroke-width="1.75" />
<line x1="36.40" y1="691.96" x2="1399.50" y2="691.96" stroke="#2b2b2b" stroke-width="1.75" />
<line x1="124.20" y1="348.70" x2="124.20" y2="695.00" stroke="#2b2b2b" stroke-width="1.8" />
<line x1="599.80" y1="348.70" x2="599.80" y2="695.00" stroke="#2b2b2b" stroke-width="1.8" />
<line x1="904.40" y1="348.70" x2="904.40" y2="695.00" stroke="#2b2b2b" stroke-width="1.8" />
<line x1="1072.60" y1="348.70" x2="1072.60" y2="695.00" stroke="#2b2b2b" stroke-width="1.8" />
<line x1="1249.00" y1="348.70" x2="1249.00" y2="695.00" stroke="#2b2b2b" stroke-width="1.8" />
<line x1="1398.60" y1="348.70" x2="1398.60" y2="695.00" stroke="#2b2b2b" stroke-width="1.8" />
<text x="40.50" y="369.80" font-size="17.6" fill="#000" textLength="29.40" lengthAdjust="spacingAndGlyphs">No.</text>
<text x="128.40" y="369.80" font-size="17.6" fill="#000" textLength="35.50" lengthAdjust="spacingAndGlyphs">Title</text>
<text x="603.40" y="369.80" font-size="17.6" fill="#000" textLength="85.50" lengthAdjust="spacingAndGlyphs">Distributor</text>
<text x="908.40" y="369.80" font-size="17.6" fill="#000" textLength="105.75" lengthAdjust="spacingAndGlyphs">Release Date</text>
<text x="1076.30" y="369.80" font-size="17.6" fill="#000" textLength="165.35" lengthAdjust="spacingAndGlyphs">Domestic Sales (in $)</text>
<text x="1252.85" y="369.80" font-size="17.6" fill="#000" textLength="138.80" lengthAdjust="spacingAndGlyphs">World Sales (in $)</text>
<text x="110.85" y="396.18" font-size="17.6" fill="#000" textLength="9.85" lengthAdjust="spacingAndGlyphs">1</text>
<text x="128.40" y="396.18" font-size="17.6" fill="#000" textLength="401.50" lengthAdjust="spacingAndGlyphs">Star Wars: Episode VII - The Force Awakens (2015)</text>
<text x="603.40" y="396.18" font-size="17.6" fill="#000" textLength="290.25" lengthAdjust="spacingAndGlyphs">Walt Disney Studios Motion Pictures</text>
<text x="908.40" y="396.18" font-size="17.6" fill="#000" textLength="154.75" lengthAdjust="spacingAndGlyphs">December 16, 2015</text>
<text x="1156.75" y="396.18" font-size="17.6" fill="#000" textLength="88.65" lengthAdjust="spacingAndGlyphs">936662225</text>
<text x="1296.50" y="396.18" font-size="17.6" fill="#000" textLength="98.50" lengthAdjust="spacingAndGlyphs">2069521700</text>
<text x="110.85" y="422.56" font-size="17.6" fill="#000" textLength="9.85" lengthAdjust="spacingAndGlyphs">2</text>
<text x="128.40" y="422.56" font-size="17.6" fill="#000" textLength="211.00" lengthAdjust="spacingAndGlyphs">Avengers: Endgame (2019)</text>
<text x="603.40" y="422.56" font-size="17.6" fill="#000" textLength="290.25" lengthAdjust="spacingAndGlyphs">Walt Disney Studios Motion Pictures</text>
<text x="908.40" y="422.56" font-size="17.6" fill="#000" textLength="109.00" lengthAdjust="spacingAndGlyphs">April 24, 2019</text>
<text x="1156.75" y="422.56" font-size="17.6" fill="#000" textLength="88.65" lengthAdjust="spacingAndGlyphs">858373000</text>
<text x="1296.50" y="422.56" font-size="17.6" fill="#000" textLength="98.50" lengthAdjust="spacingAndGlyphs">2797501328</text>
<text x="110.85" y="448.94" font-size="17.6" fill="#000" textLength="9.85" lengthAdjust="spacingAndGlyphs">3</text>
<text x="128.40" y="448.94" font-size="17.6" fill="#000" textLength="108.25" lengthAdjust="spacingAndGlyphs">Avatar (2009)</text>
<text x="603.40" y="448.94" font-size="17.6" fill="#000" textLength="181.50" lengthAdjust="spacingAndGlyphs">Twentieth Century Fox</text>
<text x="908.40" y="448.94" font-size="17.6" fill="#000" textLength="154.75" lengthAdjust="spacingAndGlyphs">December 16, 2009</text>
<text x="1156.75" y="448.94" font-size="17.6" fill="#000" textLength="88.65" lengthAdjust="spacingAndGlyphs">760507625</text>
<text x="1296.50" y="448.94" font-size="17.6" fill="#000" textLength="98.50" lengthAdjust="spacingAndGlyphs">2847246203</text>
<text x="110.85" y="475.32" font-size="17.6" fill="#000" textLength="9.85" lengthAdjust="spacingAndGlyphs">4</text>
<text x="128.40" y="475.32" font-size="17.6" fill="#000" textLength="165.50" lengthAdjust="spacingAndGlyphs">Black Panther (2018)</text>
<text x="603.40" y="475.32" font-size="17.6" fill="#000" textLength="290.25" lengthAdjust="spacingAndGlyphs">Walt Disney Studios Motion Pictures</text>
<text x="908.40" y="475.32" font-size="17.6" fill="#000" textLength="24.75" lengthAdjust="spacingAndGlyphs">NA</text>
<text x="1156.75" y="475.32" font-size="17.6" fill="#000" textLength="88.65" lengthAdjust="spacingAndGlyphs">700426566</text>
<text x="1296.50" y="475.32" font-size="17.6" fill="#000" textLength="98.50" lengthAdjust="spacingAndGlyphs">1347597973</text>
<text x="110.85" y="501.70" font-size="17.6" fill="#000" textLength="9.85" lengthAdjust="spacingAndGlyphs">5</text>
<text x="128.40" y="501.70" font-size="17.6" fill="#000" textLength="232.00" lengthAdjust="spacingAndGlyphs">Avengers: Infinity War (2018)</text>
<text x="603.40" y="501.70" font-size="17.6" fill="#000" textLength="290.25" lengthAdjust="spacingAndGlyphs">Walt Disney Studios Motion Pictures</text>
<text x="908.40" y="501.70" font-size="17.6" fill="#000" textLength="24.75" lengthAdjust="spacingAndGlyphs">NA</text>
<text x="1156.75" y="501.70" font-size="17.6" fill="#000" textLength="88.65" lengthAdjust="spacingAndGlyphs">678815482</text>
<text x="1296.50" y="501.70" font-size="17.6" fill="#000" textLength="98.50" lengthAdjust="spacingAndGlyphs">2048359754</text>
<text x="110.85" y="528.08" font-size="17.6" fill="#000" textLength="9.85" lengthAdjust="spacingAndGlyphs">6</text>
<text x="128.40" y="528.08" font-size="17.6" fill="#000" textLength="274.75" lengthAdjust="spacingAndGlyphs">Spider-Man: No Way Home (2021)</text>
<text x="603.40" y="528.08" font-size="17.6" fill="#000" textLength="271.00" lengthAdjust="spacingAndGlyphs">Sony Pictures Entertainment (SPE)</text>
<text x="908.40" y="528.08" font-size="17.6" fill="#000" textLength="24.75" lengthAdjust="spacingAndGlyphs">NA</text>
<text x="1156.75" y="528.08" font-size="17.6" fill="#000" textLength="88.65" lengthAdjust="spacingAndGlyphs">675813257</text>
<text x="1296.50" y="528.08" font-size="17.6" fill="#000" textLength="98.50" lengthAdjust="spacingAndGlyphs">1544455963</text>
<text x="110.85" y="554.46" font-size="17.6" fill="#000" textLength="9.85" lengthAdjust="spacingAndGlyphs">7</text>
<text x="128.40" y="554.46" font-size="17.6" fill="#000" textLength="109.50" lengthAdjust="spacingAndGlyphs">Titanic (1997)</text>
<text x="603.40" y="554.46" font-size="17.6" fill="#000" textLength="157.75" lengthAdjust="spacingAndGlyphs">Paramount Pictures</text>
<text x="908.40" y="554.46" font-size="17.6" fill="#000" textLength="155.25" lengthAdjust="spacingAndGlyphs">December 19, 1997</text>
<text x="1156.75" y="554.46" font-size="17.6" fill="#000" textLength="88.65" lengthAdjust="spacingAndGlyphs">659363944</text>
<text x="1296.50" y="554.46" font-size="17.6" fill="#000" textLength="98.50" lengthAdjust="spacingAndGlyphs">2201647264</text>
<text x="110.85" y="580.84" font-size="17.6" fill="#000" textLength="9.85" lengthAdjust="spacingAndGlyphs">8</text>
<text x="128.40" y="580.84" font-size="17.6" fill="#000" textLength="170.75" lengthAdjust="spacingAndGlyphs">Jurassic World (2015)</text>
<text x="603.40" y="580.84" font-size="17.6" fill="#000" textLength="143.50" lengthAdjust="spacingAndGlyphs">Universal Pictures</text>
<text x="908.40" y="580.84" font-size="17.6" fill="#000" textLength="109.00" lengthAdjust="spacingAndGlyphs">June 10, 2015</text>
<text x="1156.75" y="580.84" font-size="17.6" fill="#000" textLength="88.65" lengthAdjust="spacingAndGlyphs">652385625</text>
<text x="1296.50" y="580.84" font-size="17.6" fill="#000" textLength="98.50" lengthAdjust="spacingAndGlyphs">1670516444</text>
<text x="110.85" y="607.22" font-size="17.6" fill="#000" textLength="9.85" lengthAdjust="spacingAndGlyphs">9</text>
<text x="128.40" y="607.22" font-size="17.6" fill="#000" textLength="162.00" lengthAdjust="spacingAndGlyphs">The Avengers (2012)</text>
<text x="603.40" y="607.22" font-size="17.6" fill="#000" textLength="290.25" lengthAdjust="spacingAndGlyphs">Walt Disney Studios Motion Pictures</text>
<text x="908.40" y="607.22" font-size="17.6" fill="#000" textLength="109.25" lengthAdjust="spacingAndGlyphs">April 25, 2012</text>
<text x="1156.75" y="607.22" font-size="17.6" fill="#000" textLength="88.65" lengthAdjust="spacingAndGlyphs">623357910</text>
<text x="1296.50" y="607.22" font-size="17.6" fill="#000" textLength="98.50" lengthAdjust="spacingAndGlyphs">1518815515</text>
<text x="101.00" y="633.60" font-size="17.6" fill="#000" textLength="19.70" lengthAdjust="spacingAndGlyphs">16</text>
<text x="128.40" y="633.60" font-size="17.6" fill="#000" textLength="225.75" lengthAdjust="spacingAndGlyphs">Beauty and the Beast (2017)</text>
<text x="603.40" y="633.60" font-size="17.6" fill="#000" textLength="290.25" lengthAdjust="spacingAndGlyphs">Walt Disney Studios Motion Pictures</text>
<text x="908.40" y="633.60" font-size="17.6" fill="#000" textLength="124.75" lengthAdjust="spacingAndGlyphs">March 16, 2017</text>
<text x="1156.75" y="633.60" font-size="17.6" fill="#000" textLength="88.65" lengthAdjust="spacingAndGlyphs">504481165</text>
<text x="1296.50" y="633.60" font-size="17.6" fill="#000" textLength="98.50" lengthAdjust="spacingAndGlyphs">1273576220</text>
<text x="101.00" y="659.98" font-size="17.6" fill="#000" textLength="19.70" lengthAdjust="spacingAndGlyphs">17</text>
<text x="128.40" y="659.98" font-size="17.6" fill="#000" textLength="154.50" lengthAdjust="spacingAndGlyphs">Finding Dory (2016)</text>
<text x="603.40" y="659.98" font-size="17.6" fill="#000" textLength="290.25" lengthAdjust="spacingAndGlyphs">Walt Disney Studios Motion Pictures</text>
<text x="908.40" y="659.98" font-size="17.6" fill="#000" textLength="24.75" lengthAdjust="spacingAndGlyphs">NA</text>
<text x="1156.75" y="659.98" font-size="17.6" fill="#000" textLength="88.65" lengthAdjust="spacingAndGlyphs">486295561</text>
<text x="1296.50" y="659.98" font-size="17.6" fill="#000" textLength="98.50" lengthAdjust="spacingAndGlyphs">1028570942</text>
<text x="101.00" y="686.36" font-size="17.6" fill="#000" textLength="19.70" lengthAdjust="spacingAndGlyphs">18</text>
<text x="128.40" y="686.36" font-size="17.6" fill="#000" textLength="124.75" lengthAdjust="spacingAndGlyphs">Frozen II (2019)</text>
<text x="603.40" y="686.36" font-size="17.6" fill="#000" textLength="290.25" lengthAdjust="spacingAndGlyphs">Walt Disney Studios Motion Pictures</text>
<text x="908.40" y="686.36" font-size="17.6" fill="#000" textLength="157.75" lengthAdjust="spacingAndGlyphs">November 20, 2019</text>
<text x="1156.75" y="686.36" font-size="17.6" fill="#000" textLength="88.65" lengthAdjust="spacingAndGlyphs">477373578</text>
<text x="1296.50" y="686.36" font-size="17.6" fill="#000" textLength="98.50" lengthAdjust="spacingAndGlyphs">1450026933</text>
<rect x="125.40" y="349.40" width="473.80" height="25.60" fill="none" stroke="#e4e9f0" stroke-width="2.6"/>
<rect x="124.30" y="348.50" width="475.50" height="27.60" fill="none" stroke="#217346" stroke-width="2.2"/>
<rect x="596.40" y="371.80" width="6.80" height="6.80" fill="#217346" stroke="#ffffff" stroke-width="1.1"/>
<rect x="1792" y="241" width="253" height="444" fill="#000" opacity="0.2" filter="url(#mshadow)"/>
<rect x="1791.00" y="237.00" width="252.60" height="444.00" fill="#ffffff" stroke="#c8c6c4" stroke-width="1"/>
<rect x="1793.00" y="357.60" width="249.00" height="38.80" fill="#d2d0ce"/>
<line x1="1836.40" y1="398.40" x2="2042.00" y2="398.40" stroke="#e1dfdd" stroke-width="1.2" />
<line x1="1836.40" y1="599.00" x2="2042.00" y2="599.00" stroke="#e1dfdd" stroke-width="1.2" />
<text x="1841.40" y="264.50" font-size="16.4" fill="#3b3a39" textLength="41.00" lengthAdjust="spacingAndGlyphs"><tspan text-decoration="underline">F</tspan>ind...</text>
<text x="1841.40" y="303.90" font-size="16.4" fill="#3b3a39" textLength="68.60" lengthAdjust="spacingAndGlyphs"><tspan text-decoration="underline">R</tspan>eplace...</text>
<text x="1841.40" y="343.50" font-size="16.4" fill="#3b3a39" textLength="54.00" lengthAdjust="spacingAndGlyphs"><tspan text-decoration="underline">G</tspan>o To...</text>
<text x="1841.40" y="382.90" font-size="16.4" fill="#3b3a39" textLength="111.00" lengthAdjust="spacingAndGlyphs">Go To <tspan text-decoration="underline">S</tspan>pecial...</text>
<text x="1841.40" y="425.50" font-size="16.4" fill="#3b3a39" textLength="66.40" lengthAdjust="spacingAndGlyphs">Form<tspan text-decoration="underline">u</tspan>las</text>
<text x="1841.40" y="464.90" font-size="16.4" fill="#3b3a39" textLength="43.40" lengthAdjust="spacingAndGlyphs"><tspan text-decoration="underline">N</tspan>otes</text>
<text x="1841.40" y="504.50" font-size="16.4" fill="#3b3a39" textLength="169.00" lengthAdjust="spacingAndGlyphs"><tspan text-decoration="underline">C</tspan>onditional Formatting</text>
<text x="1841.40" y="544.10" font-size="16.4" fill="#3b3a39" textLength="70.60" lengthAdjust="spacingAndGlyphs">Co<tspan text-decoration="underline">n</tspan>stants</text>
<text x="1841.40" y="583.50" font-size="16.4" fill="#3b3a39" textLength="114.60" lengthAdjust="spacingAndGlyphs">Data <tspan text-decoration="underline">V</tspan>alidation</text>
<text x="1841.40" y="626.50" font-size="16.4" fill="#3b3a39" textLength="104.00" lengthAdjust="spacingAndGlyphs">Select <tspan text-decoration="underline">O</tspan>bjects</text>
<text x="1841.40" y="665.90" font-size="16.4" fill="#3b3a39" textLength="117.00" lengthAdjust="spacingAndGlyphs">Selection <tspan text-decoration="underline">P</tspan>ane...</text>
<circle cx="1822.2" cy="252.8" r="7.2" fill="#fafafa" stroke="#3b3a39" stroke-width="1.5"/>
<line x1="1817.00" y1="258.00" x2="1809.20" y2="266.00" stroke="#3b3a39" stroke-width="1.5" stroke-linecap="round"/>
<text x="1814.80" y="295.60" font-size="15.2" fill="#b146c2">b</text>
<text x="1820.40" y="306.60" font-size="15.2" fill="#2b8bd4">c</text>
<path d="M1812.2,292.8 c-5.4,1.8 -5.6,7.8 -0.8,9.6 h6.2 M1814.6,298.8 l3.8,3.6 l-3.8,3.6" fill="none" stroke="#2b8bd4" stroke-width="1.5" stroke-linecap="round" stroke-linejoin="round"/>
<path d="M1808.6,334.4 h18.8 M1820.6,327.8 l6.8,6.6 l-6.8,6.6" fill="none" stroke="#2b8bd4" stroke-width="1.5" stroke-linecap="round" stroke-linejoin="round"/>
<path d="M1811,609.4 v17.4 l4.4,-3.8 l2.8,5.8 l2.6,-1.2 l-2.8,-5.6 h5.6 z" fill="#ffffff" stroke="#3b3a39" stroke-width="1.4" stroke-linejoin="round"/>
<rect x="1815.00" y="648.00" width="14.40" height="12.60" fill="#fcd9a8" stroke="#e8870c" stroke-width="1.5"/>
<rect x="1808.40" y="658.60" width="10.00" height="9.60" fill="#ffffff" stroke="#3b3a39" stroke-width="1.4"/>
<path d="M1820.4,656.4 v12 l3,-2.6 l2,4 l2,-1 l-2,-3.8 h4 z" fill="#ffffff" stroke="#3b3a39" stroke-width="1.3" stroke-linejoin="round"/>
<circle cx="112.7" cy="46.2" r="38.2" fill="#c00000"/>
<text x="112.70" y="62.60" font-size="46" fill="#ffffff" font-weight="bold" text-anchor="middle">1</text>
<rect x="81.20" y="94.00" width="65.60" height="48.80" fill="none" stroke="#c00000" stroke-width="6"/>
<path d="M1725.4,176.8 H1627 a8.8,8.8 0 0 0 0,17.6 H1725.4 V217 L1779,185.8 L1725.4,154.2 Z" fill="none" stroke="#c00000" stroke-width="8.2" stroke-linejoin="round"/>
<circle cx="1683" cy="126.2" r="38" fill="#c00000"/>
<text x="1683.00" y="142.80" font-size="46" fill="#ffffff" font-weight="bold" text-anchor="middle">2</text>
<path d="M1743.6,369.4 H1645.4 a9,9 0 0 0 0,18 H1743.6 V410 L1797.2,378.4 L1743.6,347 Z" fill="none" stroke="#c00000" stroke-width="8.0" stroke-linejoin="round"/>
<circle cx="1697.7" cy="324.4" r="38.2" fill="#c00000"/>
<text x="1697.70" y="341.00" font-size="46" fill="#ffffff" font-weight="bold" text-anchor="middle">3</text>
</svg>
</body></html>
